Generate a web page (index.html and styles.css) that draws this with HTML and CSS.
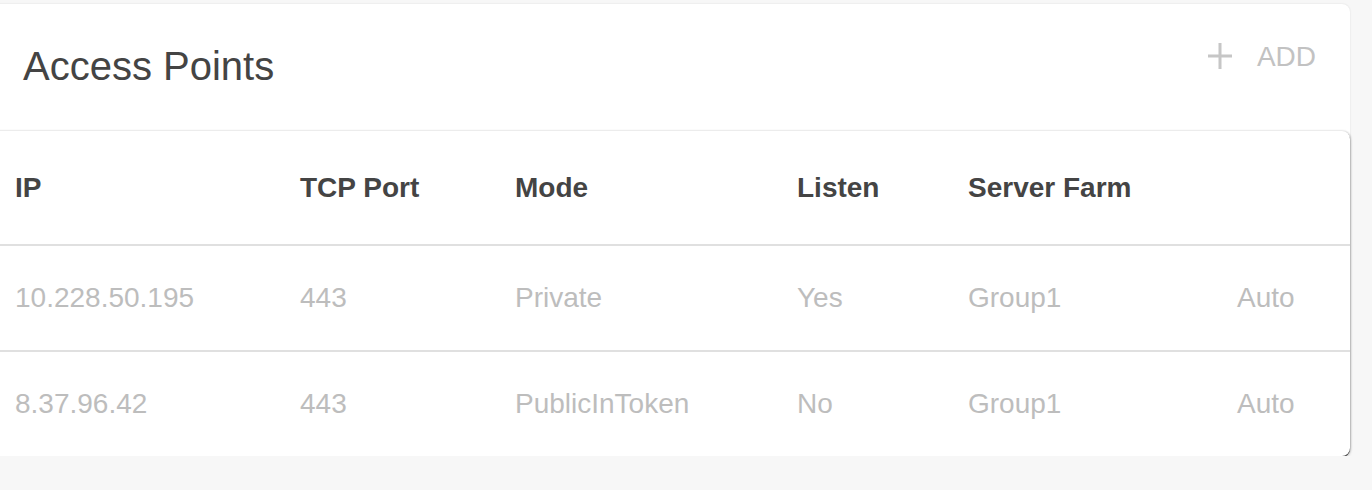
FILE: index.html
```html
<!DOCTYPE html>
<html>
<head>
<meta charset="utf-8">
<link rel="stylesheet" href="styles.css">
</head>
<body>
<div class="panel">
  <div class="panel-header">
    <h1 class="title">Access Points</h1>
    <button class="add-btn">
      <svg class="plus" width="24" height="26" viewBox="0 0 24 26"><path d="M12 0V26M0 13H24" stroke="#c6c6c6" stroke-width="3" fill="none"/></svg>
      <span>ADD</span>
    </button>
  </div>
  <div class="table-card">
    <div class="row head">
      <div>IP</div><div>TCP Port</div><div>Mode</div><div>Listen</div><div>Server Farm</div><div></div>
    </div>
    <div class="row">
      <div>10.228.50.195</div><div>443</div><div>Private</div><div>Yes</div><div>Group1</div><div>Auto</div>
    </div>
    <div class="row last">
      <div>8.37.96.42</div><div>443</div><div>PublicInToken</div><div>No</div><div>Group1</div><div>Auto</div>
    </div>
  </div>
</div>
</body>
</html>
```
FILE: styles.css
```css
html, body {
  margin: 0;
  padding: 0;
  background: #f7f7f7;
  font-family: "Liberation Sans", Arial, sans-serif;
  overflow: hidden;
}
.panel {
  margin-top: 4px;
  margin-left: -20px;
  width: 1370px;
  background: #fff;
  border-radius: 8px;
  box-shadow: 0 0 2px rgba(0,0,0,0.12);
}
.panel-header {
  height: 127px;
  display: flex;
  justify-content: space-between;
  align-items: flex-start;
  padding: 0 34px 0 43px;
  box-sizing: border-box;
}
.title {
  margin: 38px 0 0;
  font-size: 40px;
  line-height: 48px;
  font-weight: normal;
  color: #444;
}
.add-btn {
  margin-top: 37px;
  display: flex;
  align-items: center;
  gap: 25px;
  background: none;
  border: 0;
  padding: 0;
  font-family: inherit;
  font-size: 28px;
  line-height: 32px;
  color: #c2c2c2;
}
.plus { margin-top: -2px; }
.table-card {
  background: #fff;
  border-radius: 8px;
  box-shadow: 0 -1px 2px rgba(0,0,0,0.04), 0 1px 0 rgba(0,0,0,0.7), 0 2px 3px rgba(0,0,0,0.25), 1px 0 2px rgba(0,0,0,0.15);
}
.row {
  display: grid;
  grid-template-columns: 285px 215px 282px 171px 269px 1fr;
  padding-left: 35px;
  height: 104px;
  align-items: center;
  font-size: 28px;
  color: #bdbdbd;
  border-bottom: 2px solid #e0e0e0;
}
.row.head {
  height: 113px;
  font-weight: bold;
  color: #444;
}
.row.last { border-bottom: 0; }
```
